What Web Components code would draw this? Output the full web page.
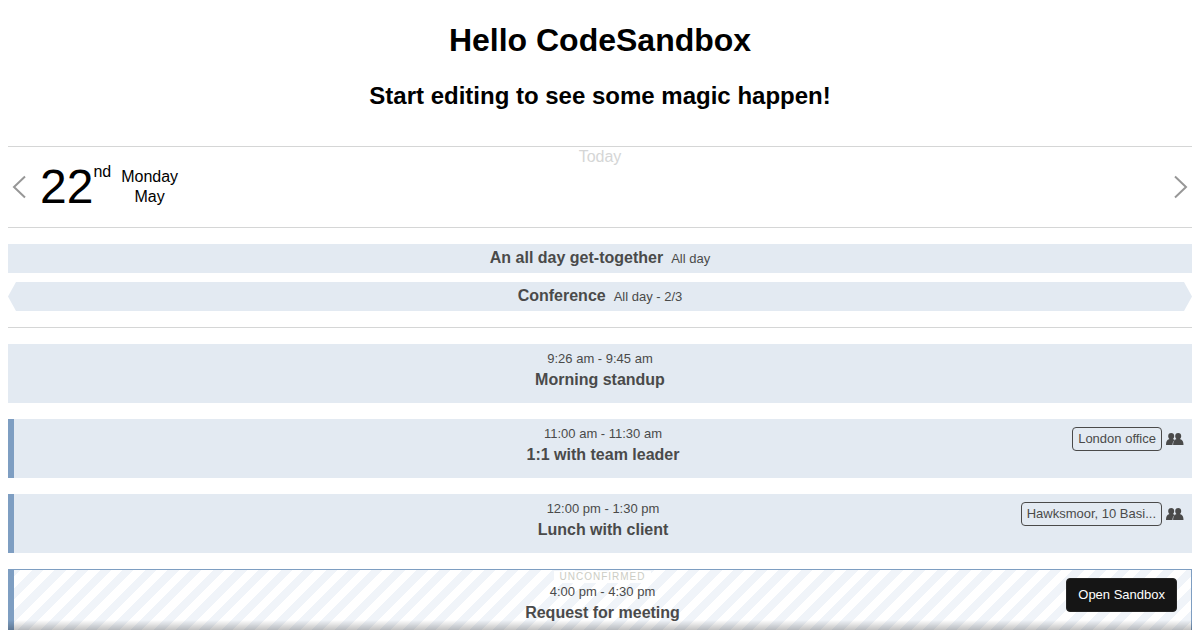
<!DOCTYPE html>
<html lang="en">
<head>
<meta charset="utf-8">
<meta name="viewport" content="width=device-width, initial-scale=1">
<title>Day calendar</title>
<style>
    body {
        margin: 8px;
        background: #fff;
        font-family: "Liberation Sans", Arial, sans-serif;
        overflow-x: hidden;
    }
</style>
</head>
<body>
<day-app></day-app>
<script>
'use strict';

class BaseElement extends HTMLElement {
    constructor() {
        super();

        this.attachShadow({ mode: 'open' });
    }

    attr(name) {
        return this.getAttribute(name) || '';
    }
}

customElements.define('page-intro', class extends BaseElement {
    connectedCallback() {
        this.shadowRoot.innerHTML = `
            <style>
                :host { display: block; text-align: center; color: #000; }
                h1 { margin: 14px 0 22px; font-size: 32px; line-height: 37px; }
                h2 { margin: 0 0 36px; font-size: 24px; line-height: 29px; }
            </style>
            <h1><slot name="title"></slot></h1>
            <h2><slot></slot></h2>`;
    }
});

customElements.define('nav-arrow', class extends BaseElement {
    connectedCallback() {
        const
            next = this.attr('direction') === 'next',
            points = next ? '1,2.5 12,13 1,23.5' : '14,2.5 3,13 14,23.5';

        this.shadowRoot.innerHTML = `
            <style>
                :host { display: block; }
                button { display: block; padding: 0 3px; border: 0; background: none; cursor: pointer; }
                svg { display: block; }
                polyline { fill: none; stroke: #979797; stroke-width: 2; }
            </style>
            <button type="button" aria-label="${next ? 'Next day' : 'Previous day'}">
                <svg width="15" height="26" viewBox="0 0 15 26"><polyline points="${points}"/></svg>
            </button>`;
    }
});

customElements.define('day-header', class extends BaseElement {
    connectedCallback() {
        this.shadowRoot.innerHTML = `
            <style>
                :host {
                    display: grid;
                    grid-template-columns: 1fr auto 1fr;
                    height: 80px;
                    border: solid #d5d6d6;
                    border-width: 1px 0;
                }
                .date, .end { display: flex; align-items: center; }
                .end { justify-content: flex-end; }
                .number { margin-left: 11px; font-size: 48px; line-height: 56px; }
                .suffix { align-self: flex-start; margin-top: 15px; font-size: 16px; line-height: 20px; }
                .names { margin-left: 10px; font-size: 16px; line-height: 20px; text-align: center; }
                .today { font-size: 16px; line-height: 20px; color: #d5d6d6; }
            </style>
            <div class="date">
                <nav-arrow direction="previous"></nav-arrow>
                <span class="number">${this.attr('number')}</span>
                <span class="suffix">${this.attr('suffix')}</span>
                <div class="names"><div>${this.attr('weekday')}</div><div>${this.attr('month')}</div></div>
            </div>
            <div class="today"><slot></slot></div>
            <div class="end"><nav-arrow direction="next"></nav-arrow></div>`;
    }
});

customElements.define('all-day-event', class extends BaseElement {
    connectedCallback() {
        this.shadowRoot.innerHTML = `
            <style>
                :host {
                    display: flex;
                    justify-content: center;
                    align-items: baseline;
                    gap: 8px;
                    padding: 4px 8px;
                    background: #e3eaf2;
                    color: #4a4a4a;
                    line-height: 20px;
                }
                :host([continues]) {
                    clip-path: polygon(8px 0, calc(100% - 8px) 0, 100% 50%, calc(100% - 8px) 100%, 8px 100%, 0 50%);
                }
                .title { font-size: 16px; font-weight: bold; }
                .time { font-size: 13px; }
            </style>
            <span class="title"><slot></slot></span>
            <span class="time">${this.attr('time')}</span>`;
    }
});

customElements.define('people-icon', class extends BaseElement {
    connectedCallback() {
        this.shadowRoot.innerHTML = `
            <style>
                :host { display: block; }
                svg { display: block; fill: #4a4a4a; }
            </style>
            <svg width="18" height="12" viewBox="0 0 18 12" role="img" aria-label="Has attendees">
                <path d="M5.2 0C7.1 0 8.2 1.300 8.200 3c0 1.200-.5 2.300-1.300 3 .8.3 1.400.6 1.800 1.100C7.200 8.200 6.600 9.800 6.500 12H0c0-3.300.9-5.100 3.500-6C2.700 5.300 2.200 4.200 2.200 3c0-1.700 1.100-3 3-3z"/>
                <path d="M12.200 0c1.900 0 3 1.300 3 3 0 1.200-.5 2.300-1.300 3 2.600.9 3.600 2.700 3.600 6H7.100c0-3.300.9-5.100 3.400-6-.8-.7-1.300-1.800-1.300-3 0-1.700 1.100-3 3-3z"/>
            </svg>`;
    }
});

customElements.define('calendar-event', class extends BaseElement {
    connectedCallback() {
        const
            location = this.attr('location'),
            status = this.attr('status');

        this.shadowRoot.innerHTML = `
            <style>
                :host {
                    display: grid;
                    grid-template-columns: 1fr auto 1fr;
                    background: #e3eaf2;
                    color: #4a4a4a;
                }
                :host([attending]) { border-left: 6px solid #7e9ec2; }
                :host([status]) {
                    border: 1px solid #7e9ec2;
                    border-left-width: 6px;
                    background: repeating-linear-gradient(-45deg, #fff 0 8px, #f0f4f9 8px 16px);
                }
                .info { grid-column: 2; padding: 6px 0 12px; text-align: center; }
                :host([status]) .info { padding: 1px 0 9px; }
                .status {
                    width: 97px;
                    margin: 0 auto;
                    background: #fff;
                    color: #cccdc4;
                    font-size: 10px;
                    letter-spacing: 1px;
                    line-height: 12px;
                }
                .time { font-size: 13px; line-height: 18px; }
                .title { font-size: 16px; font-weight: bold; line-height: 23px; }
                .extras { display: flex; justify-content: flex-end; align-items: center; gap: 4px; height: 24px; padding: 8px; }
                .location {
                    padding: 0 5px;
                    border: 1px solid #4a4a4a;
                    border-radius: 4px;
                    font-size: 13px;
                    line-height: 22px;
                    white-space: nowrap;
                }
            </style>
            <div class="info">
                ${status ? `<div class="status">${status}</div>` : ''}
                <div class="time">${this.attr('time')}</div>
                <div class="title"><slot></slot></div>
            </div>
            ${location ? `<div class="extras"><span class="location">${location}</span><people-icon></people-icon></div>` : ''}`;
    }
});

customElements.define('sandbox-link', class extends BaseElement {
    connectedCallback() {
        this.shadowRoot.innerHTML = `
            <style>
                :host { position: fixed; right: 23px; bottom: 18px; z-index: 2; }
                button {
                    display: block;
                    padding: 8px 11px;
                    border: 1px solid #242424;
                    border-radius: 4px;
                    background: #151515;
                    color: #fff;
                    font: 13px/16px "Liberation Sans", Arial, sans-serif;
                    cursor: pointer;
                }
            </style>
            <button type="button"><slot></slot></button>`;
    }
});

customElements.define('day-app', class extends BaseElement {
    connectedCallback() {
        this.shadowRoot.innerHTML = `
            <style>
                :host { display: block; }
                .all-day {
                    display: grid;
                    gap: 9px;
                    padding: 16px 0;
                    border-bottom: 1px solid #d5d6d6;
                }
                .events { display: grid; gap: 16px; padding-top: 16px; }
                .fade {
                    position: fixed;
                    right: 8px;
                    bottom: 0;
                    left: 8px;
                    height: 10px;
                    background: linear-gradient(rgba(0, 0, 0, 0), rgba(0, 0, 0, .24));
                }
            </style>
            <page-intro><span slot="title">Hello CodeSandbox</span>Start editing to see some magic happen!</page-intro>
            <day-header number="22" suffix="nd" weekday="Monday" month="May">Today</day-header>
            <div class="all-day">
                <all-day-event time="All day">An all day get-together</all-day-event>
                <all-day-event time="All day - 2/3" continues>Conference</all-day-event>
            </div>
            <div class="events">
                <calendar-event time="9:26 am - 9:45 am">Morning standup</calendar-event>
                <calendar-event time="11:00 am - 11:30 am" location="London office" attending>1:1 with team leader</calendar-event>
                <calendar-event time="12:00 pm - 1:30 pm" location="Hawksmoor, 10 Basi..." attending>Lunch with client</calendar-event>
                <calendar-event time="4:00 pm - 4:30 pm" status="UNCONFIRMED">Request for meeting</calendar-event>
            </div>
            <div class="fade"></div>
            <sandbox-link>Open Sandbox</sandbox-link>`;
    }
});
</script>
</body>
</html>
